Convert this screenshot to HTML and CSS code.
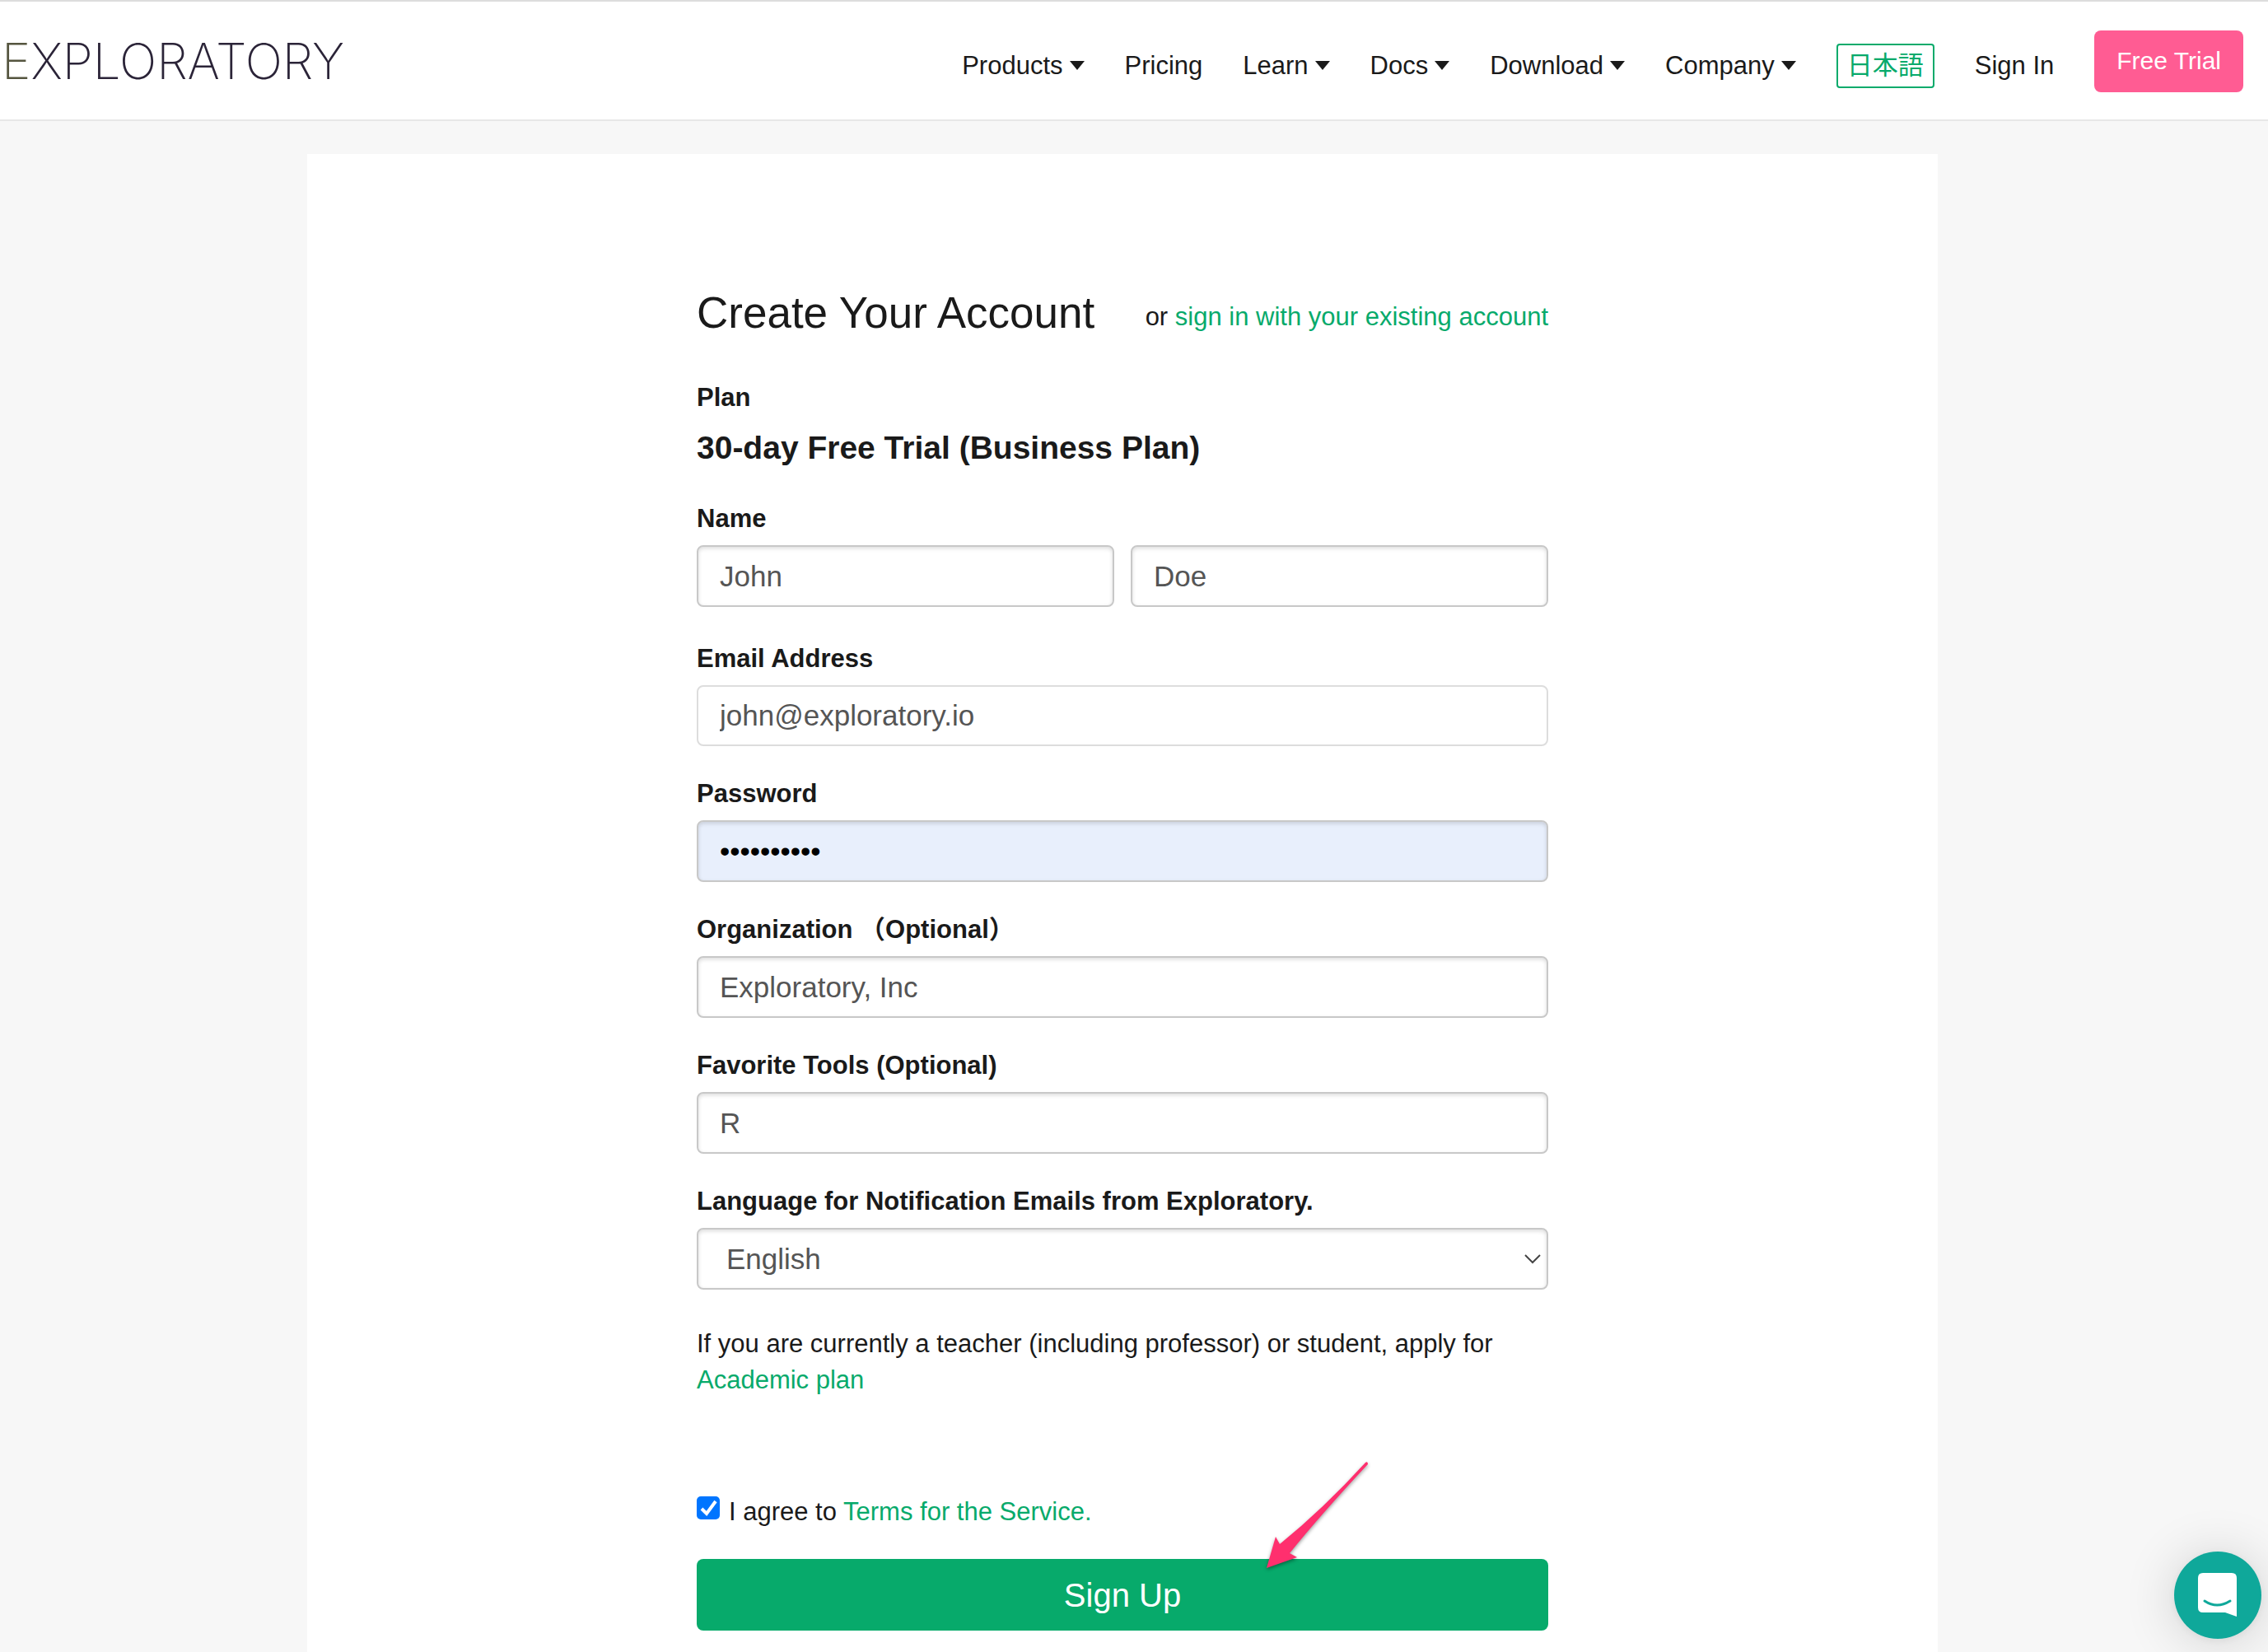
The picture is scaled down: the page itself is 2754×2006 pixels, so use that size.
FILE: index.html
```html
<!DOCTYPE html>

<html lang="en">

<head>

    <title>Sign Up - Exploratory</title>

    <meta charset="utf-8">

    <link rel="stylesheet" href="styles.css">

</head>

<body>

    <header class="top">

        <a class="logo" href="#"><span>E</span>XPLORATORY</a>

        <nav class="menu">
            <a class="menu-link drop" href="#">Products</a>
            <a class="menu-link" href="#">Pricing</a>
            <a class="menu-link drop" href="#">Learn</a>
            <a class="menu-link drop" href="#">Docs</a>
            <a class="menu-link drop" href="#">Download</a>
            <a class="menu-link drop" href="#">Company</a>
            <a class="menu-link lang" href="#" lang="ja">日本語</a>
            <a class="menu-link" href="#">Sign In</a>
            <a class="trial" href="#">Free Trial</a>
        </nav>

    </header>

    <main class="main">

        <form class="card">

            <div class="heading">
                <h1>Create Your Account</h1>
                <p>or <a href="#">sign in with your existing account</a></p>
            </div>

            <div class="field">
                <span class="label">Plan</span>
                <h2>30-day Free Trial (Business Plan)</h2>
            </div>

            <div class="field name">
                <label for="first_name">Name</label>
                <div class="name-row">
                    <input id="first_name" type="text" value="John">
                    <input id="last_name" type="text" value="Doe" aria-label="Last name">
                </div>
            </div>

            <div class="field">
                <label for="email">Email Address</label>
                <input id="email" class="plain" type="email" value="john@exploratory.io">
            </div>

            <div class="field">
                <label for="password">Password</label>
                <input id="password" class="filled" type="password" value="exploratry">
            </div>

            <div class="field">
                <label for="org">Organization （Optional）</label>
                <input id="org" type="text" value="Exploratory, Inc">
            </div>

            <div class="field">
                <label for="tools">Favorite Tools (Optional)</label>
                <input id="tools" type="text" value="R">
            </div>

            <div class="field">
                <label for="mail_lang">Language for Notification Emails from Exploratory.</label>
                <div class="select-wrap">
                    <select id="mail_lang">
                        <option>English</option>
                        <option>日本語</option>
                    </select>
                    <svg class="chevron" viewBox="0 0 20 12"><path d="M1 1l9 9 9-9"/></svg>
                </div>
            </div>

            <p class="academic">If you are currently a teacher (including professor) or student, apply for <a href="#">Academic plan</a></p>

            <div class="agree">
                <span class="check">
                    <input id="agree" type="checkbox" checked>
                    <svg viewBox="0 0 28 28"><path d="M6 15l6 6L23 6"/></svg>
                </span>
                <label for="agree">I agree to <a href="#">Terms for the Service.</a></label>
            </div>

            <div class="submit">
                <button type="submit">Sign Up</button>
                <svg class="arrow" viewBox="0 0 126 132"><path d="M1 130L12 92l5 9Q70 58 121 2q3-2 3 2Q66 66 29 112l9 5z"/></svg>
            </div>

        </form>

    </main>

    <button class="chat" type="button" aria-label="Open chat">
        <svg viewBox="0 0 48 54">
            <path class="bubble" d="M6 0h35q6 0 6 6v47l-14-5H6q-6 0-6-6V6q0-6 6-6z"/>
            <path class="smile" d="M8 34q15 10 31 0"/>
        </svg>
    </button>

</body>

</html>
```

FILE: styles.css
```css
* {
    margin: 0;
    padding: 0;
    box-sizing: border-box;
}

body {
    display: flex;
    flex-direction: column;
    min-height: 100vh;
    font-family: "Liberation Sans", "Noto Sans CJK JP", sans-serif;
    font-size: 31px;
    line-height: 44px;
    color: #1a1a1a;
    background: #f7f7f7;
}

a {
    text-decoration: none;
    color: #07aa6b;
}



.top {
    display: flex;
    align-items: center;
    justify-content: space-between;
    padding: 35px 30px 33px 2px;
    border-top: 2px solid #ddd;
    border-bottom: 2px solid #e7e7e7;
    background: #fff;
}

.logo {
    font-family: Inter, sans-serif;
    font-weight: 200;
    font-size: 60px;
    line-height: 75px;
    color: #2b2438;
}

.logo span {
    color: #55553f;
}

.menu {
    display: flex;
    align-items: center;
    gap: 49px;
}

.menu-link {
    margin-top: 10px;
    color: #1a1a1a;
}

.menu-link.drop::after {
    content: "";
    display: inline-block;
    margin-left: 8px;
    vertical-align: 5px;
    border: 9px solid transparent;
    border-top: 11px solid #1a1a1a;
    border-bottom: 0;
}

.menu-link.lang {
    padding: 3px 11px;
    border: 2px solid #07aa6b;
    border-radius: 4px;
    color: #07aa6b;
}

.trial {
    padding: 15px 27px 16px;
    border-radius: 8px;
    font-size: 30px;
    color: #fff;
    background: #ff5c93;
}



.main {
    display: flex;
    flex: 1;
    justify-content: center;
    padding: 40px 28px 0 0;
}

.card {
    width: 1980px;
    padding: 163px 473px 26px;
    background: #fff;
}

.heading {
    display: flex;
    align-items: flex-end;
    justify-content: space-between;
    margin-bottom: 51px;
}

h1 {
    font-size: 53px;
    font-weight: normal;
    line-height: 60px;
}

.heading p {
    padding-bottom: 3px;
}

h2 {
    font-size: 39px;
    line-height: 57px;
}

.field {
    margin-bottom: 36px;
}

.field.name {
    margin-bottom: 41px;
}

.field label,
.field .label {
    display: block;
    margin-bottom: 10px;
    font-weight: bold;
}

.name-row {
    display: flex;
    gap: 20px;
}

.field input,
.field select {
    display: block;
    width: 100%;
    height: 75px;
    padding: 0 26px;
    border: 2px solid #c8c8c8;
    border-radius: 8px;
    font: inherit;
    font-size: 35px;
    color: #555;
    background: #fff;
    box-shadow: inset 0 2px 5px rgba(0,0,0,0.14);
}

.field input.plain {
    height: 74px;
    border-color: #ddd;
    box-shadow: none;
}

.field input.filled {
    color: #000;
    background: #e8effc;
}

.field select {
    appearance: none;
    padding-left: 34px;
}

.select-wrap {
    position: relative;
}

.chevron {
    position: absolute;
    top: 32px;
    right: 9px;
    width: 20px;
    height: 12px;
    fill: none;
    stroke: #444;
    stroke-width: 2;
    pointer-events: none;
}

.academic {
    margin-top: 44px;
}

.agree {
    display: flex;
    gap: 11px;
    margin: 116px 0 35px;
}

.check {
    position: relative;
    width: 28px;
    height: 28px;
    margin-top: 3px;
}

.check input {
    display: block;
    appearance: none;
    width: 28px;
    height: 28px;
    border-radius: 5px;
    background: #0075ff;
}

.check svg {
    position: absolute;
    top: 0;
    left: 0;
    width: 28px;
    height: 28px;
    fill: none;
    stroke: #fff;
    stroke-width: 4;
    pointer-events: none;
}

.submit {
    position: relative;
}

.submit button {
    display: block;
    width: 100%;
    height: 87px;
    border: 0;
    border-radius: 8px;
    font: inherit;
    font-size: 40px;
    color: #fff;
    background: #07aa6b;
}

.arrow {
    position: absolute;
    top: -119px;
    left: 691px;
    width: 126px;
    height: 132px;
    fill: #ff2f6e;
    filter: drop-shadow(0 2px 2px rgba(0,0,0,0.4));
    pointer-events: none;
}



.chat {
    position: fixed;
    right: 8px;
    bottom: 16px;
    display: flex;
    align-items: center;
    justify-content: center;
    width: 106px;
    height: 106px;
    border: 0;
    border-radius: 50%;
    background: #0fa89a;
    box-shadow: 0 2px 12px rgba(0,0,0,0.06), 0 4px 64px rgba(0,0,0,0.16);
}

.chat svg {
    width: 48px;
    height: 54px;
}

.chat .bubble {
    fill: #fff;
}

.chat .smile {
    fill: none;
    stroke: #0fa89a;
    stroke-width: 3;
    stroke-linecap: round;
}
```
